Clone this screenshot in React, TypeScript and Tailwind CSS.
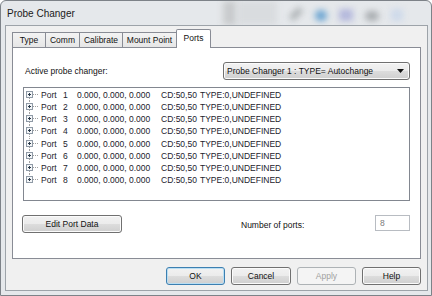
const TABS = [
  { name: 'Type', w: 'w-[34px]' },
  { name: 'Comm', w: 'w-[35px]' },
  { name: 'Calibrate', w: 'w-[44px]' },
  { name: 'Mount Point', w: 'w-[55px]' },
];

const PORTS = [1, 2, 3, 4, 5, 6, 7, 8];

const btn =
  'h-[18px] flex items-center justify-center rounded-[3px] border border-[#707070] bg-[linear-gradient(#f2f2f2,#ebebeb_50%,#dddddd_50%,#cfcfcf)] shadow-[inset_0_0_0_1px_#fbfbfb] text-[#111]';

// little tree expander with dotted connectors
function Expander({ first, last }: { first: boolean; last: boolean }) {
  return (
    <svg width="17" height="12" viewBox="0 0 17 12" className="shrink-0">
      {!first && <line x1="5.5" y1="0" x2="5.5" y2="2.5" stroke="#a0a0a0" strokeDasharray="1 1" />}
      {!last && <line x1="5.5" y1="9" x2="5.5" y2="12" stroke="#a0a0a0" strokeDasharray="1 1" />}
      <line x1="9" y1="5.5" x2="14" y2="5.5" stroke="#a0a0a0" strokeDasharray="1 1" />
      <rect x="2.5" y="2.5" width="6" height="6" fill="#f4f6f8" stroke="#8f9aa6" />
      <line x1="4" y1="5.5" x2="7" y2="5.5" stroke="#2a3a4a" />
      <line x1="5.5" y1="4" x2="5.5" y2="7" stroke="#2a3a4a" />
    </svg>
  );
}

export default function App() {
  return (
    <div
      className="relative w-[432px] h-[296px] overflow-hidden rounded-t-[6px] border border-[#7d8288] bg-[#e5e8eb] px-[4px] pr-[3px] text-[8.5px] text-[#111]"
      style={{ fontFamily: '"Liberation Sans", Arial, sans-serif' }}
    >
      {/* blurred desktop showing through the glass title bar */}
      <div className="absolute left-[222px] top-0 w-[14px] h-[24px] bg-[#c9cbcd] blur-[3px]" />
      <div className="absolute left-[236px] top-0 w-[40px] h-[24px] bg-[#d9dcdf] blur-[3px]" />
      <div className="absolute left-[288px] top-[10px] w-[14px] h-[6px] -rotate-45 bg-[#9a9fa2] opacity-80 blur-[3px]" />
      <div className="absolute left-[314px] top-[9px] w-[12px] h-[11px] rounded-full bg-[#4d94cc] opacity-80 blur-[3px]" />
      <div className="absolute left-[338px] top-[8px] w-[14px] h-[12px] bg-[#a8acd8] opacity-80 blur-[3px]" />
      <div className="absolute left-[364px] top-[10px] w-[14px] h-[10px] rounded-full bg-[#9a9ea2] opacity-80 blur-[3px]" />
      <div className="absolute left-[390px] top-[8px] w-[12px] h-[12px] bg-[#c8d6ea] opacity-80 blur-[3px]" />

      {/* title bar */}
      <div className="relative h-[24px] flex items-center pl-[2px] text-[10px] text-[#1a1a1a]">Probe Changer</div>

      {/* client area */}
      <div className="relative h-[266px] border border-[#9da3a9] bg-[#f0f0f0] px-[6px] pt-[3px]">
        {/* tab strip */}
        <div className="flex items-end h-[18px]">
          {TABS.map((t, i) => (
            <div
              key={t.name}
              className={`${t.w} ${i > 0 ? '-ml-px' : ''} h-[15px] flex items-center justify-center border border-b-0 border-[#898c95] bg-[linear-gradient(#f3f3f3,#e6e6e6)]`}
            >
              {t.name}
            </div>
          ))}
          <div className="relative z-10 -ml-px -mb-px w-[35px] h-[19px] flex items-center justify-center pb-[2px] rounded-t-[2px] border border-b-0 border-[#898c95] bg-white">
            Ports
          </div>
        </div>

        {/* tab panel */}
        <div className="h-[212px] border border-[#898c95] bg-white px-[10px] pt-[14px]">
          <div className="flex items-center justify-between">
            <span className="ml-[2px]">Active probe changer:</span>
            <div className={`${btn} w-[187px] !justify-between pl-[3px] pr-[5px]`}>
              <span>Probe Changer 1 : TYPE= Autochange</span>
              <svg width="7" height="4" viewBox="0 0 7 4">
                <path d="M0 0h7L3.5 4z" fill="#111" />
              </svg>
            </div>
          </div>

          <div className="mt-[7px] h-[114px] border border-[#828790] bg-white pt-[1px] text-[#22222c]">
            {PORTS.map((p, i) => (
              <div key={p} className="flex items-center h-[12.15px] leading-[12px]">
                <Expander first={i === 0} last={i === PORTS.length - 1} />
                <span className="w-[22px]">Port</span>
                <span className="w-[14px]">{p}</span>
                <span className="w-[84px]">0.000, 0.000, 0.000</span>
                <span className="w-[39px]">CD:50,50</span>
                <span>TYPE:0,UNDEFINED</span>
              </div>
            ))}
          </div>

          <div className="mt-[14px] flex items-start">
            <div className={`${btn} -ml-px w-[100px]`}>Edit Port Data</div>
            <span className="ml-[119px] mt-[4px]">Number of ports:</span>
            <div className="ml-auto w-[35px] h-[16px] border border-[#b8bcc2] bg-white pl-[4px] leading-[14px] text-[#7a7a7a]">8</div>
          </div>
        </div>

        {/* dialog buttons */}
        <div className="mt-[8px] flex justify-end gap-[6px]">
          <div className={`${btn} w-[59px] !border-[#3c7fb1] !shadow-[inset_0_0_0_1px_#b9def3]`}>OK</div>
          <div className={`${btn} w-[60px]`}>Cancel</div>
          <div className="h-[18px] w-[59px] flex items-center justify-center rounded-[3px] border border-[#adb2b5] bg-[#f4f4f4] text-[#a0a0a0]">
            Apply
          </div>
          <div className={`${btn} w-[59px]`}>Help</div>
        </div>
      </div>
    </div>
  );
}
